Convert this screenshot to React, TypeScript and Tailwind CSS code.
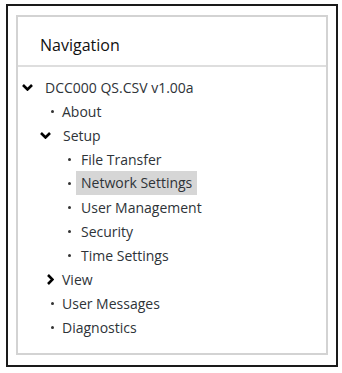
import React from "react";

type Node = {
  label: string;
  kind: "open" | "closed" | "leaf";
  level: number;
  active?: boolean;
};

const tree: Node[] = [
  { label: "DCC000 QS.CSV v1.00a", kind: "open", level: 0 },
  { label: "About", kind: "leaf", level: 1 },
  { label: "Setup", kind: "open", level: 1 },
  { label: "File Transfer", kind: "leaf", level: 2 },
  { label: "Network Settings", kind: "leaf", level: 2, active: true },
  { label: "User Management", kind: "leaf", level: 2 },
  { label: "Security", kind: "leaf", level: 2 },
  { label: "Time Settings", kind: "leaf", level: 2 },
  { label: "View", kind: "closed", level: 1 },
  { label: "User Messages", kind: "leaf", level: 1 },
  { label: "Diagnostics", kind: "leaf", level: 1 },
];

function ChevronDown() {
  return (
    <svg width="11" height="7" viewBox="0 0 11 7" className="shrink-0">
      <path d="M1 1 L5.5 5.5 L10 1" fill="none" stroke="#000" strokeWidth="2.6" />
    </svg>
  );
}

function ChevronRight() {
  return (
    <svg width="7" height="11" viewBox="0 0 7 11" className="shrink-0">
      <path d="M1 1 L5.5 5.5 L1 10" fill="none" stroke="#000" strokeWidth="2.6" />
    </svg>
  );
}

function Dot() {
  return <span className="block h-[3px] w-[3px] shrink-0 rounded-full bg-[#333]" />;
}

function Row({ node }: { node: Node }) {
  if (node.level === 0) {
    return (
      <div className="flex h-6 items-center pl-[4px]">
        <ChevronDown />
        <span className="ml-[12px]">{node.label}</span>
      </div>
    );
  }
  if (node.level === 1) {
    if (node.kind === "open") {
      return (
        <div className="flex h-6 items-center pl-[22px]">
          <ChevronDown />
          <span className="ml-[12px]">{node.label}</span>
        </div>
      );
    }
    if (node.kind === "closed") {
      return (
        <div className="flex h-6 items-center pl-[29px]">
          <ChevronRight />
          <span className="ml-[8px]">{node.label}</span>
        </div>
      );
    }
    return (
      <div className="flex h-6 items-center pl-[33px]">
        <Dot />
        <span className="ml-[8px]">{node.label}</span>
      </div>
    );
  }
  return (
    <div className="flex h-6 items-center pl-[50px]">
      <Dot />
      <span className={node.active ? "ml-[5px] bg-[#d6d6d6] px-[5px] leading-6" : "ml-[10px]"}>
        {node.label}
      </span>
    </div>
  );
}

export default function App() {
  return (
    <div className="h-[373px] w-[342px] bg-white pl-[6px] pt-[4px]" style={{ fontFamily: '"Open Sans", "Noto Sans", sans-serif' }}>
      <div className="h-[363px] w-[332px] border-2 border-[#1a1a1a]">
        <div className="ml-[8px] mt-[9px] h-[340px] w-[312px] border-2 border-[#d3d3d3]">
          <div className="border-b-2 border-[#dedede] pb-[10px] pl-[22px] pt-[18px] text-[16px] font-medium leading-5 text-[#111]">
            Navigation
          </div>
          <div className="pt-[8px] text-[14px] text-[#2e3338]">
            {tree.map((n) => (
              <Row key={n.label} node={n} />
            ))}
          </div>
        </div>
      </div>
    </div>
  );
}
